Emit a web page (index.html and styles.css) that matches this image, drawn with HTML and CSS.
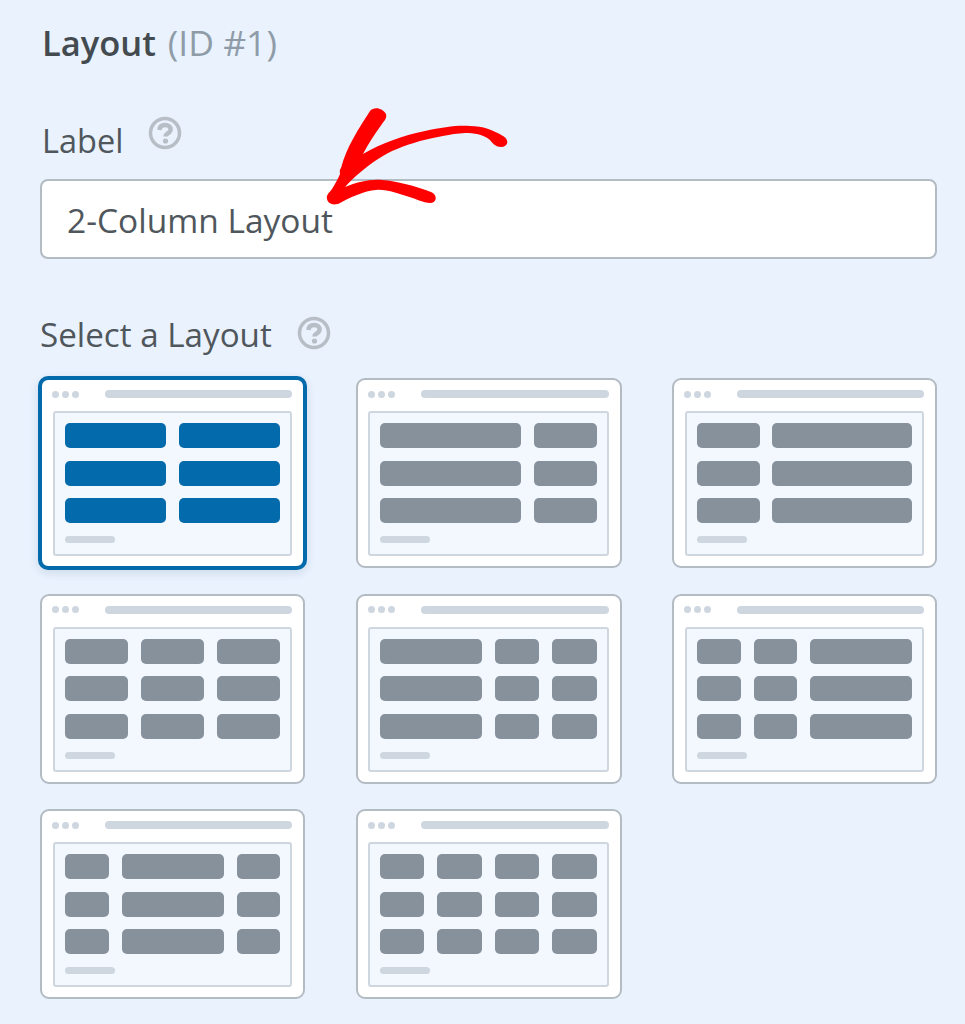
FILE: index.html
```html
<!DOCTYPE html>
<html lang="en">
<head>
<meta charset="UTF-8">
<title>Layout field options</title>
<link rel="stylesheet" href="styles.css">
</head>
<body>
<div class="panel">
  <h1 class="field-title">Layout <span class="field-id">(ID #1)</span></h1>

  <div class="label-row label-row-first">
    <label class="field-label" for="label">Label</label>
    <svg class="help" viewBox="0 0 34 34"><circle cx="17" cy="17" r="14.5"/><path class="mark" d="M11.5 14c.2-3.3 2.4-5 5.6-5 3.300 0 5.500 1.800 5.500 4.500 0 4-5.100 3.800-5.100 7"/><circle class="dot" cx="17.500" cy="25" r="2.600"/></svg>
  </div>
  <input class="text-input" id="label" type="text" value="2-Column Layout">

  <div class="label-row label-row-second">
    <span class="field-label">Select a Layout</span>
    <svg class="help" viewBox="0 0 34 34"><circle cx="17" cy="17" r="14.5"/><path class="mark" d="M11.5 14c.2-3.3 2.4-5 5.6-5 3.300 0 5.500 1.800 5.500 4.500 0 4-5.100 3.800-5.100 7"/><circle class="dot" cx="17.500" cy="25" r="2.600"/></svg>
  </div>

  <div class="layouts">
    <div class="card selected">
      <div class="card-top"><i></i><i></i><i></i><b></b></div>
      <div class="card-body">
        <div class="bars col-half"><u></u><u></u><u></u><u></u><u></u><u></u></div>
        <div class="foot"></div>
      </div>
    </div>
    <div class="card">
      <div class="card-top"><i></i><i></i><i></i><b></b></div>
      <div class="card-body">
        <div class="bars col-wide-narrow"><u></u><u></u><u></u><u></u><u></u><u></u></div>
        <div class="foot"></div>
      </div>
    </div>
    <div class="card">
      <div class="card-top"><i></i><i></i><i></i><b></b></div>
      <div class="card-body">
        <div class="bars col-narrow-wide"><u></u><u></u><u></u><u></u><u></u><u></u></div>
        <div class="foot"></div>
      </div>
    </div>
    <div class="card">
      <div class="card-top"><i></i><i></i><i></i><b></b></div>
      <div class="card-body">
        <div class="bars col-thirds"><u></u><u></u><u></u><u></u><u></u><u></u><u></u><u></u><u></u></div>
        <div class="foot"></div>
      </div>
    </div>
    <div class="card">
      <div class="card-top"><i></i><i></i><i></i><b></b></div>
      <div class="card-body">
        <div class="bars col-2-1-1"><u></u><u></u><u></u><u></u><u></u><u></u><u></u><u></u><u></u></div>
        <div class="foot"></div>
      </div>
    </div>
    <div class="card">
      <div class="card-top"><i></i><i></i><i></i><b></b></div>
      <div class="card-body">
        <div class="bars col-1-1-2"><u></u><u></u><u></u><u></u><u></u><u></u><u></u><u></u><u></u></div>
        <div class="foot"></div>
      </div>
    </div>
    <div class="card">
      <div class="card-top"><i></i><i></i><i></i><b></b></div>
      <div class="card-body">
        <div class="bars col-1-2-1"><u></u><u></u><u></u><u></u><u></u><u></u><u></u><u></u><u></u></div>
        <div class="foot"></div>
      </div>
    </div>
    <div class="card">
      <div class="card-top"><i></i><i></i><i></i><b></b></div>
      <div class="card-body">
        <div class="bars col-quarters"><u></u><u></u><u></u><u></u><u></u><u></u><u></u><u></u><u></u><u></u><u></u><u></u></div>
        <div class="foot"></div>
      </div>
    </div>
  </div>
</div>

<!-- red hand drawn arrow on top of the input -->
<svg class="arrow" viewBox="0 0 965 1024">
  <path d="M370 111C374 106 383 108 386 114C387 118 385 120 382 124C374 135 368 144 363 154C382 143 404 135 425 131C443 127 458 125 470 126C483 126 493 130 503 136C510 140 508 147 501 147C496 147 493 144 490 140C483 134 474 133 465 133C450 134 436 137 420 141C403 146 390 151 378 159C366 167 354 177 345 187C357 182 370 179 382 180C397 181 415 186 431 192C438 195 437 203 430 203C424 203 414 198 403 195C393 192 384 189 376 190C364 191 351 197 340 203C334 206 328 204 327 199C326 195 329 193 332 189C335 184 338 179 340 174C340 172 339 170 341 168C347 146 358 130 370 111Z"/>
</svg>
</body>
</html>
```

FILE: styles.css
```css
body {
    margin: 0;
    background-color: #e9f2fd;
    font-family: "Open Sans", "Noto Sans", sans-serif;
    color: #50575c;
}
.panel {
    height: 1024px;
    box-sizing: border-box;
    padding: 19px 28px 0 40px;
    overflow: hidden;
}
.field-title {
    height: 48px;
    margin: 0 0 0 2px;
    font-size: 34.500px;
    line-height: 48px;
    font-weight: 600;
    color: #444b50;
}
.field-id {
    margin-left: 3px;
    font-size: 35.500px;
    line-height: 1;
    font-weight: 400;
    color: #8f9ca8;
}
.label-row {
    display: flex;
    align-items: center;
    gap: 25px;
}
.label-row-first {
    margin: 48px 0 18px 2px;
    height: 46px;
}
.label-row-first .field-label {
    margin-top: 6px;
}
.label-row-second {
    margin: 53px 0 20px 0;
    height: 46px;
}
.field-label {
    font-size: 32.500px;
    line-height: 46px;
    color: #50575c;
}
.label-row-second .field-label {
    font-size: 33.200px;
}
.help {
    width: 34px;
    height: 34px;
    margin-top: -11px;
    fill: none;
    stroke: #b7bec6;
    stroke-width: 3.500;
}
.label-row-second .help {
    margin-top: -5px;
}
.help .mark {
    stroke-width: 4.500;
}
.help .dot {
    fill: #b7bec6;
    stroke: none;
}
.text-input {
    display: block;
    width: 100%;
    height: 80px;
    box-sizing: border-box;
    padding: 2px 25px 0;
    background-color: #fff;
    border: 2px solid #b3bbc3;
    border-radius: 8px;
    font-family: inherit;
    font-size: 33.500px;
    color: #50575c;
}
.layouts {
    display: grid;
    grid-template-columns: 265px 266px 265px;
    grid-auto-rows: 190px;
    column-gap: 50.500px;
    row-gap: 25.500px;
}
.card {
    box-sizing: border-box;
    padding: 8px 11px 11px 10px;
    background-color: #fff;
    border: 2px solid #b3bbc3;
    border-radius: 9px;
}
.card.selected {
    margin: -2px;
    padding: 8px 11px 10px 10px;
    border: 4px solid #036aab;
    border-radius: 10px;
    box-shadow: 0 3px 8px rgba(60, 90, 130, 0.15);
}
.card-top {
    display: flex;
    align-items: center;
    gap: 3px;
    height: 12px;
    margin-bottom: 11px;
}
.card-top i {
    width: 7px;
    height: 7px;
    border-radius: 50%;
    background-color: #ced7e0;
}
.card-top b {
    flex: 1;
    height: 8px;
    margin-left: 23px;
    border-radius: 4px;
    background-color: #ced7e0;
}
.card-body {
    height: 145px;
    box-sizing: border-box;
    padding: 10px;
    background-color: #f3f8fe;
    border: 2px solid #ced7e0;
    border-radius: 3px;
}
/* outer columns are 1px narrower, panel starts 1px further in */
.card:nth-child(3n+1) .card-body,
.card:nth-child(3n) .card-body {
    margin-left: 1px;
}
.bars {
    display: grid;
    grid-auto-rows: 25px;
    gap: 12.500px 13px;
}
.bars u {
    display: block;
    border-radius: 5px;
    background-color: #86919c;
}
.selected .bars u {
    background-color: #036aab;
}
.col-half { grid-template-columns: 1fr 1fr; }
.col-wide-narrow { grid-template-columns: 141px 1fr; }
.col-narrow-wide { grid-template-columns: 63px 1fr; column-gap: 12px; }
.col-thirds { grid-template-columns: 1fr 1fr 1fr; }
.col-2-1-1 { grid-template-columns: 102px 1fr 1fr; }
.col-1-1-2 { grid-template-columns: 1fr 1fr 102px; }
.col-1-2-1 { grid-template-columns: 1fr 102px 1fr; }
.col-quarters { grid-template-columns: repeat(4, 1fr); }
.foot {
    width: 50px;
    height: 7px;
    margin-top: 13px;
    border-radius: 4px;
    background-color: #ced7e0;
}
.arrow {
    position: absolute;
    top: 0;
    left: 0;
    width: 965px;
    height: 1024px;
    fill: #fe0000;
    pointer-events: none;
}
```
